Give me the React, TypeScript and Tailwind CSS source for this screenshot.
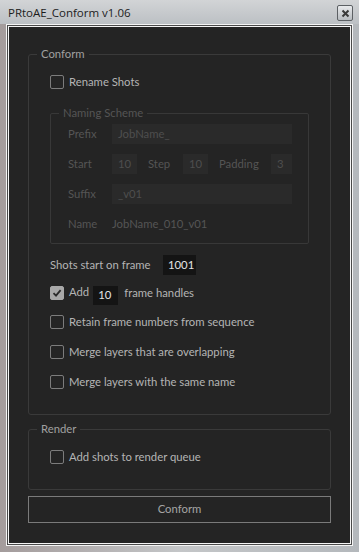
import React from "react";

const font = { fontFamily: "Lato, 'Open Sans', sans-serif" };

function Box({ checked = false }: { checked?: boolean }) {
  return (
    <div
      className={
        "w-[14px] h-[14px] rounded-[2px] border-[1.5px] flex items-center justify-center shrink-0 " +
        (checked ? "bg-[#a8a8a8] border-[#a8a8a8]" : "border-[#7c7c7c] bg-[#242424]")
      }
    >
      {checked && (
        <svg width="10" height="10" viewBox="0 0 10 10">
          <path d="M1.5 5.2 L4 7.6 L8.6 2.2" fill="none" stroke="#2a2a2a" strokeWidth="1.8" />
        </svg>
      )}
    </div>
  );
}

function Check({ label, checked = false }: { label: string; checked?: boolean }) {
  return (
    <div className="flex items-center gap-[5px] h-[14px]">
      <Box checked={checked} />
      <span className="text-[11.3px] text-[#b4b4b4] leading-none">{label}</span>
    </div>
  );
}

function DimInput({ w, value }: { w: string; value: string }) {
  return (
    <div className={"h-[20px] bg-[#2a2a2a] text-[11.3px] text-[#4e4e4e] flex items-center px-[6px] " + w}>{value}</div>
  );
}

export default function App() {
  return (
    <div
      className="w-[359px] h-[552px] bg-gradient-to-r from-[#a49c9c] via-[#c4c6c8] to-[#b4b8bc] flex flex-col"
      style={font}
    >
      <div className="h-[24px] flex items-center justify-between pl-[8px] pr-[6px] bg-gradient-to-b from-[#d2d4d6] to-[#bcc0c4]">
        <span className="text-[11.5px] text-[#1c1c1c] pt-[2px]" style={{ fontFamily: "'Open Sans', sans-serif" }}>
          PRtoAE_Conform v1.06
        </span>
        <div className="w-[16px] h-[16px] mt-[2px] border border-[#5c6064] rounded-[2px] bg-gradient-to-b from-[#e8eaec] to-[#b8bcc0] flex items-center justify-center">
          <svg width="9" height="9" viewBox="0 0 9 9">
            <path d="M1.5 1.5 L7.5 7.5 M7.5 1.5 L1.5 7.5" stroke="#3a3a3a" strokeWidth="2" />
          </svg>
        </div>
      </div>
      <div className="mx-[6px] mb-[6px] flex-1 border border-[#f4f4f4] bg-[#4a4a4a] p-px flex">
        <div className="flex-1 border border-[#f4f4f4] bg-[#242424] px-[19px] pt-[27px] flex flex-col">
          {/* Conform group */}
          <div className="relative border border-[#3a3a3a] rounded-[3px] h-[361px] pt-[20px] pl-[21px]">
            <span className="absolute left-[8px] top-[-9px] bg-[#242424] px-[4px] text-[11.3px] text-[#a0a0a0] leading-[16px]">
              Conform
            </span>
            <Check label="Rename Shots" />
            <div className="relative mt-[24px] border border-[#383838] rounded-[2px] w-[259px] h-[131px] pt-[10px] pl-[17px]">
              <span className="absolute left-[8px] top-[-9px] bg-[#242424] px-[4px] text-[11.3px] text-[#555555] leading-[16px]">
                Naming Scheme
              </span>
              <div className="flex flex-col gap-[10px] text-[11.3px] text-[#555555]">
                <div className="flex items-center">
                  <span className="w-[44px]">Prefix</span>
                  <DimInput w="w-[180px]" value="JobName_" />
                </div>
                <div className="flex items-center">
                  <span className="w-[44px]">Start</span>
                  <DimInput w="w-[25px]" value="10" />
                  <span className="ml-[11px] w-[35px]">Step</span>
                  <DimInput w="w-[25px]" value="10" />
                  <span className="ml-[11px] w-[52px]">Padding</span>
                  <DimInput w="w-[21px]" value="3" />
                </div>
                <div className="flex items-center">
                  <span className="w-[44px]">Suffix</span>
                  <DimInput w="w-[180px]" value="_v01" />
                </div>
                <div className="flex items-center h-[20px]">
                  <span className="w-[44px]">Name</span>
                  <span>JobName_010_v01</span>
                </div>
              </div>
            </div>
            <div className="flex items-center mt-[11px] h-[20px]">
              <span className="text-[11.3px] text-[#b4b4b4] w-[113px]">Shots start on frame</span>
              <div className="w-[33px] h-[20px] bg-[#141414] text-[11.3px] text-[#e4e4e4] flex items-center px-[5px]">1001</div>
            </div>
            <div className="flex items-start mt-[10px] h-[20px]">
              <div className="mt-px">
                <Box checked />
              </div>
              <span className="ml-[5px] text-[11.3px] text-[#b4b4b4] leading-[14px]">Add</span>
              <div className="ml-[4px] w-[25px] h-[19px] bg-[#141414] text-[11.3px] text-[#e4e4e4] flex items-center px-[5px] mt-[1px]">10</div>
              <span className="ml-[6px] text-[11.3px] text-[#b4b4b4] leading-[14px] mt-px">frame handles</span>
            </div>
            <div className="mt-[10px] flex flex-col gap-[16px]">
              <Check label="Retain frame numbers from sequence" />
              <Check label="Merge layers that are overlapping" />
              <Check label="Merge layers with the same name" />
            </div>
          </div>
          {/* Render group */}
          <div className="relative mt-[14px] border border-[#3a3a3a] rounded-[3px] h-[61px] pt-[20px] pl-[21px]">
            <span className="absolute left-[8px] top-[-9px] bg-[#242424] px-[4px] text-[11.3px] text-[#a0a0a0] leading-[16px]">
              Render
            </span>
            <Check label="Add shots to render queue" />
          </div>
          <div className="mt-[6px] h-[27px] border border-[#7a7a7a] flex items-center justify-center text-[11.3px] text-[#a4a4a4]">
            Conform
          </div>
        </div>
      </div>
    </div>
  );
}
